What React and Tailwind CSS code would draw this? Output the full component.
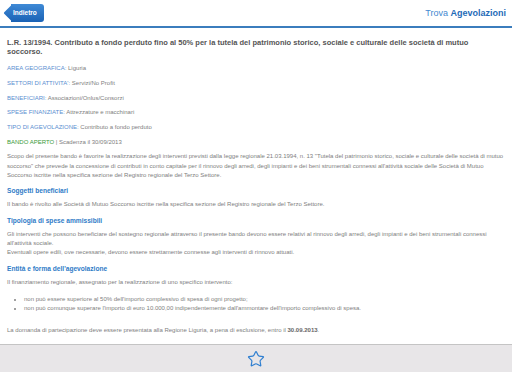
import { Star } from 'lucide-react'

function BackButton() {
  return (
    <button className="relative ml-[11px] mt-[4px] h-[18px] w-[33px] rounded-r-[3px] bg-gradient-to-b from-[#3f8ad6] to-[#1a62b5] text-left">
      <span className="absolute left-[-5px] top-[3px] h-[12px] w-[12px] rotate-45 rounded-[1px] bg-gradient-to-br from-[#3b86d3] to-[#1c64b7]" />
      <span className="relative block pl-[2px] text-[6.5px] font-bold leading-[18px] text-white">Indietro</span>
    </button>
  )
}

function Field({ label, value }) {
  return (
    <p className="leading-[14.8px]">
      <span className="text-[#5a8ed0]">{label}</span> <span className="text-[#808080]">{value}</span>
    </p>
  )
}

function Heading({ children }) {
  return <h2 className="text-[6.6px] font-bold leading-[10px] text-[#2f7cc7]">{children}</h2>
}

export default function App() {
  return (
    <div
      className="flex h-[372px] w-[512px] flex-col overflow-hidden bg-white"
      style={{ fontFamily: '"Liberation Sans", Arial, sans-serif' }}
    >
      <header className="flex h-[28px] shrink-0 items-start justify-between border-b-2 border-[#3b7dbd]">
        <BackButton />
        <div className="mr-[6px] mt-[7px] text-[9px] leading-[12px] text-[#3f88d0]">
          Trova <span className="font-bold text-[#1f6bb8]">Agevolazioni</span>
        </div>
      </header>

      <main className="flex-1 overflow-hidden px-[7px] pt-[10px] text-[6px] text-[#808080]">
        <h1 className="text-[7.5px] font-bold leading-[9px] text-[#555]">
          L.R. 13/1994. Contributo a fondo perduto fino al 50% per la tutela del patrimonio storico, sociale e culturale delle società di mutuo soccorso.
        </h1>

        <div className="mt-[5px]">
          <Field label="AREA GEOGRAFICA:" value="Liguria" />
          <Field label="SETTORI DI ATTIVITA':" value="Servizi/No Profit" />
          <Field label="BENEFICIARI:" value="Associazioni/Onlus/Consorzi" />
          <Field label="SPESE FINANZIATE:" value="Attrezzature e macchinari" />
          <Field label="TIPO DI AGEVOLAZIONE:" value="Contributo a fondo perduto" />
          <p className="leading-[14.8px]">
            <span className="text-[#3a9a3a]">BANDO APERTO</span> | Scadenza il 30/09/2013
          </p>
        </div>

        <p className="mt-[2px] leading-[9.8px]">
          Scopo del presente bando è favorire la realizzazione degli interventi previsti dalla legge regionale 21.03.1994, n. 13 "Tutela del patrimonio storico, sociale e culturale delle società di mutuo soccorso" che prevede la concessione di contributi in conto capitale per il rinnovo degli arredi, degli impianti e dei beni strumentali connessi all'attività sociale delle Società di Mutuo Soccorso iscritte nella specifica sezione del Registro regionale del Terzo Settore.
        </p>

        <div className="mt-[5px]">
          <Heading>Soggetti beneficiari</Heading>
        </div>
        <p className="mt-[4px] leading-[9.8px]">
          Il bando è rivolto alle Società di Mutuo Soccorso iscritte nella specifica sezione del Registro regionale del Terzo Settore.
        </p>

        <div className="mt-[6px]">
          <Heading>Tipologia di spese ammissibili</Heading>
        </div>
        <p className="mt-[4px] leading-[9px]">
          Gli interventi che possono beneficiare del sostegno regionale attraverso il presente bando devono essere relativi al rinnovo degli arredi, degli impianti e dei beni strumentali connessi all'attività sociale.
          <br />
          Eventuali opere edili, ove necessarie, devono essere strettamente connesse agli interventi di rinnovo attuati.
        </p>

        <div className="mt-[7px]">
          <Heading>Entità e forma dell'agevolazione</Heading>
        </div>
        <p className="mt-[3px] leading-[10px]">
          Il finanziamento regionale, assegnato per la realizzazione di uno specifico intervento:
        </p>
        <ul className="mt-[8px] list-disc pl-[17px] leading-[9.5px]">
          <li>non può essere superiore al 50% dell'importo complessivo di spesa di ogni progetto;</li>
          <li>non può comunque superare l'importo di euro 10.000,00 indipendentemente dall'ammontare dell'importo complessivo di spesa.</li>
        </ul>
        <p className="mt-[11px] leading-[10px]">
          La domanda di partecipazione deve essere presentata alla Regione Liguria, a pena di esclusione, entro il <span className="font-bold text-[#666]">30.09.2013</span>.
        </p>
      </main>

      <footer className="flex h-[28px] shrink-0 items-center justify-center border-t border-[#c4c4c4] bg-[#e8e6e8]">
        <Star size={18} strokeWidth={1.6} className="text-[#2f7fd0]" />
      </footer>
    </div>
  )
}
